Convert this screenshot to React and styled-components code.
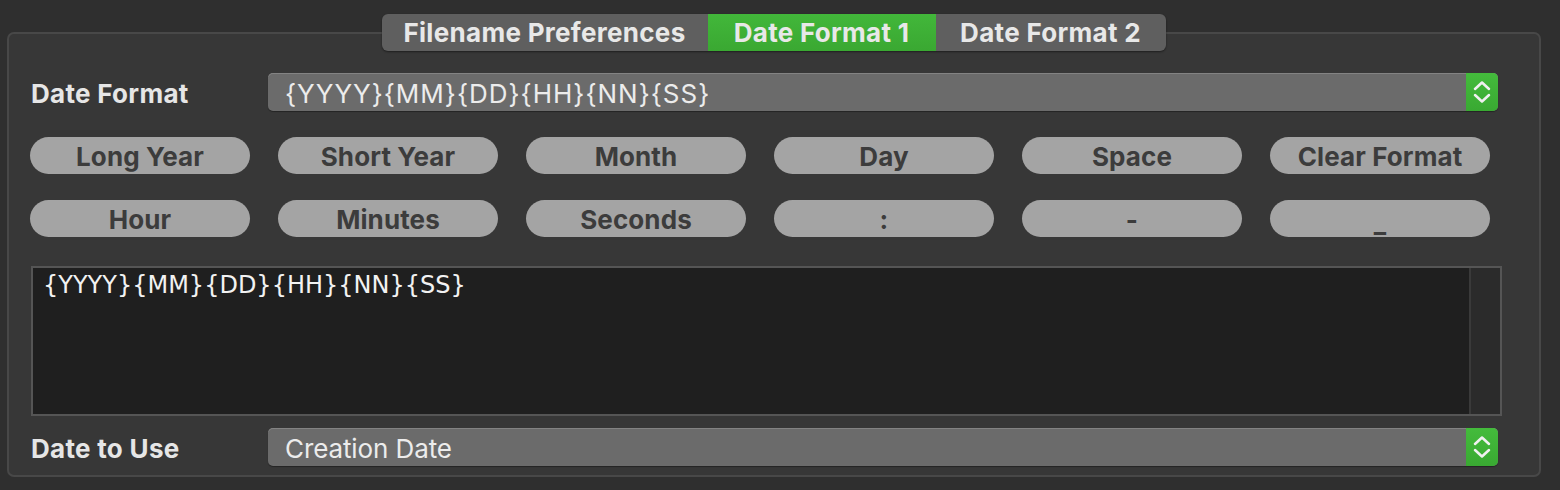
import React from 'react'
import styled, { createGlobalStyle } from 'styled-components'

const GlobalStyle = createGlobalStyle`
  html, body {
    margin: 0;
    padding: 0;
    background: #2f2f2f;
    font-family: Inter, "Noto Sans", sans-serif;
  }
`

const Page = styled.div`
  width: 1560px;
  height: 490px;
  padding: 14px 0 0 7px;
  box-sizing: border-box;
  display: flex;
  flex-direction: column;
`

const TabBar = styled.div`
  align-self: center;
  display: flex;
  margin: 0 0 -19px 0;
  position: relative;
  z-index: 1;
  width: 784px;
  height: 37px;
  border-radius: 6px;
  overflow: hidden;
  background: #5f5f5f;
  box-shadow: 0 1px 2px rgba(0, 0, 0, 0.45);
  transform: translateX(-10px);
`

const Tab = styled.div`
  flex: 0 0 ${(p) => p.width}px;
  display: flex;
  align-items: center;
  justify-content: center;
  font-size: 26px;
  font-weight: 700;
  letter-spacing: 0.3px;
  color: #e8e8e8;
  background: ${(p) => (p.active ? 'linear-gradient(#42b73a, #3aa832)' : 'transparent')};
`

const Panel = styled.div`
  width: 1534px;
  height: 445px;
  box-sizing: border-box;
  border: 2px solid #484848;
  border-radius: 7px;
  background: #373737;
  padding: 39px 0 0 22px;
  display: flex;
  flex-direction: column;
`

const Row = styled.div`
  display: flex;
  align-items: center;
  width: 1467px;
  height: 38px;
`

const Label = styled.div`
  flex: 0 0 237px;
  padding-top: 2px;
  font-size: 26px;
  font-weight: 700;
  color: #e6e6e6;
  letter-spacing: 0.3px;
`

const Select = styled.div`
  flex: 1;
  height: 38px;
  display: flex;
  border-radius: 5px;
  background: #6b6b6b;
  box-shadow: inset 0 1px 0 #838383, 0 1px 1px rgba(0, 0, 0, 0.35);
  overflow: hidden;
`

const SelectValue = styled.div`
  flex: 1;
  display: flex;
  align-items: center;
  padding: 3px 0 0 17px;
  font-size: 26px;
  color: #ececec;
  letter-spacing: ${(p) => p.spacing ?? 0}px;
`

const Stepper = styled.div`
  flex: 0 0 32px;
  display: flex;
  align-items: center;
  justify-content: center;
  background: linear-gradient(#44bb3c, #39a932);
`

const ButtonGrid = styled.div`
  display: grid;
  grid-template-columns: repeat(6, 220px);
  grid-auto-rows: 37px;
  column-gap: 28px;
  row-gap: 26px;
  margin: 26px 0 0 -1px;
`

const Pill = styled.div`
  display: flex;
  align-items: center;
  justify-content: center;
  border-radius: 19px;
  background: #a4a4a4;
  color: #3c3c3c;
  font-size: 26px;
  font-weight: 700;
  letter-spacing: 0.1px;
  padding-top: ${(p) => (p.low ? '8px' : '1px')};
  box-sizing: border-box;
`

const TextBox = styled.div`
  margin-top: 29px;
  width: 1471px;
  height: 150px;
  box-sizing: border-box;
  border: 2px solid #555555;
  background: #1f1f1f;
  display: flex;
`

const TextContent = styled.div`
  flex: 1;
  padding: 2px 0 0 10px;
  font-family: "DejaVu Sans", Verdana, sans-serif;
  font-size: 24px;
  color: #f2f2f2;
  line-height: 30px;
`

const ScrollTrack = styled.div`
  flex: 0 0 29px;
  background: #2b2b2b;
  border-left: 2px solid #3a3a3a;
`

const BottomRow = styled(Row)`
  margin-top: 12px;
`

function Chevrons() {
  return (
    <svg width="18" height="26" viewBox="0 0 18 26" fill="none">
      <path d="M2 10 L9 3.5 L16 10" stroke="#f0f0f0" strokeWidth="2.5" strokeLinecap="round" strokeLinejoin="round" />
      <path d="M2 16 L9 22.5 L16 16" stroke="#f0f0f0" strokeWidth="2.5" strokeLinecap="round" strokeLinejoin="round" />
    </svg>
  )
}

const buttons = [
  { text: 'Long Year' },
  { text: 'Short Year' },
  { text: 'Month' },
  { text: 'Day' },
  { text: 'Space' },
  { text: 'Clear Format' },
  { text: 'Hour' },
  { text: 'Minutes' },
  { text: 'Seconds' },
  { text: ':' },
  { text: '-' },
  { text: '_', low: true },
]

export default function App() {
  return (
    <>
      <GlobalStyle />
      <Page>
        <TabBar>
          <Tab width={326}>Filename Preferences</Tab>
          <Tab width={228} active>Date Format 1</Tab>
          <Tab width={230}>Date Format 2</Tab>
        </TabBar>
        <Panel>
          <Row>
            <Label>Date Format</Label>
            <Select>
              <SelectValue spacing={1}>{'{YYYY}{MM}{DD}{HH}{NN}{SS}'}</SelectValue>
              <Stepper><Chevrons /></Stepper>
            </Select>
          </Row>
          <ButtonGrid>
            {buttons.map((b) => (
              <Pill key={b.text} low={b.low}>{b.text}</Pill>
            ))}
          </ButtonGrid>
          <TextBox>
            <TextContent>{'{YYYY}{MM}{DD}{HH}{NN}{SS}'}</TextContent>
            <ScrollTrack />
          </TextBox>
          <BottomRow>
            <Label>Date to Use</Label>
            <Select>
              <SelectValue spacing={-0.1}>Creation Date</SelectValue>
              <Stepper><Chevrons /></Stepper>
            </Select>
          </BottomRow>
        </Panel>
      </Page>
    </>
  )
}
